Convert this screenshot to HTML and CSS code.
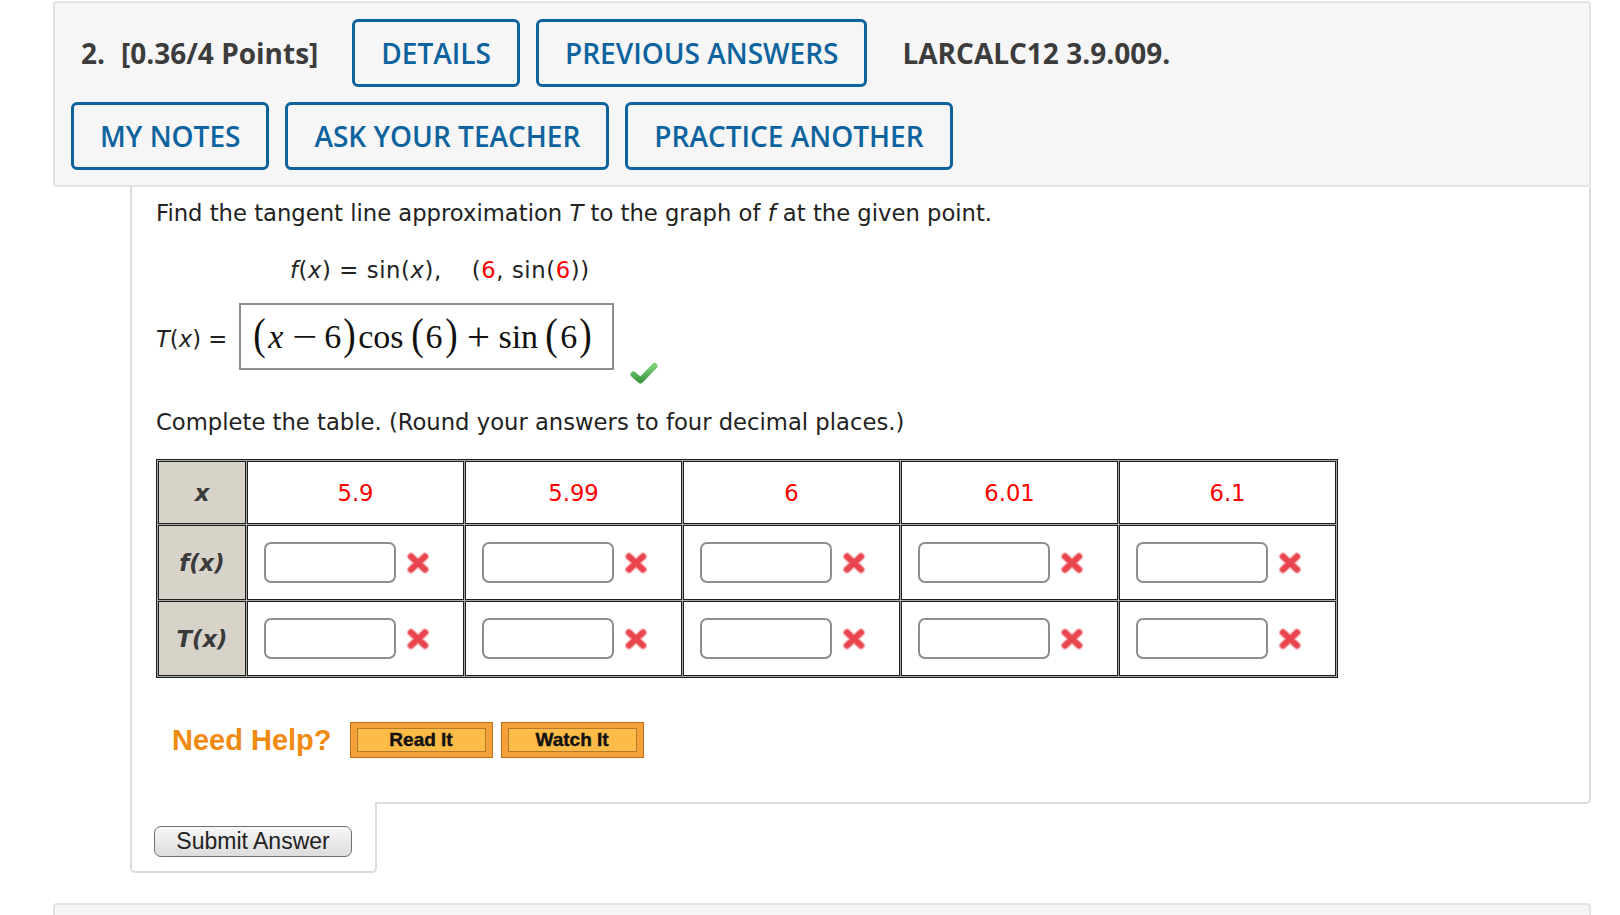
FILE: index.html
```html
<!DOCTYPE html>
<html lang="en">
<head>
<meta charset="utf-8">
<title>Question 2</title>
<link rel="stylesheet" href="styles.css">
</head>
<body>
<div class="page">
  <div class="q-header">
    <div class="hrow">
      <span class="qnum">2.</span>
      <span class="points">[0.36/4 Points]</span>
      <button class="hbtn">DETAILS</button>
      <button class="hbtn">PREVIOUS ANSWERS</button>
      <span class="qid">LARCALC12 3.9.009.</span>
    </div>
    <div class="hrow">
      <button class="hbtn">MY NOTES</button>
      <button class="hbtn">ASK YOUR TEACHER</button>
      <button class="hbtn">PRACTICE ANOTHER</button>
    </div>
  </div>

  <div class="q-body">
    <p class="prompt">Find the tangent line approximation <i>T</i> to the graph of <i>f</i> at the given point.</p>
    <p class="given"><i>f</i>(<i>x</i>) = sin(<i>x</i>),<span class="wide"></span>(<span class="red">6</span>, sin(<span class="red">6</span>))</p>
    <div class="trow">
      <span class="tlabel"><i>T</i>(<i>x</i>) =</span>
      <div class="mathbox">
        <span class="par">(</span><span class="mi">x</span><span class="mo"><span class="minus">−</span></span><span class="mn">6</span><span class="par">)</span><span class="fn">cos</span><span class="par">(</span><span class="mn">6</span><span class="par">)</span><span class="mo"><span class="plus">+</span></span><span class="fn">sin</span><span class="par">(</span><span class="mn">6</span><span class="par">)</span>
      </div>
      <svg class="check" width="28" height="22" viewBox="0 0 28 22" aria-hidden="true">
        <defs>
          <linearGradient id="gck" x1="0" y1="0" x2="0" y2="1">
            <stop offset="0" stop-color="#7ccf78"/>
            <stop offset="1" stop-color="#3d9b45"/>
          </linearGradient>
        </defs>
        <path d="M3.5 12.5 L10.5 18.5 L24.5 4" fill="none" stroke="url(#gck)" stroke-width="6" stroke-linejoin="round" stroke-linecap="round"/>
      </svg>
    </div>
    <p class="prompt complete">Complete the table. (Round your answers to four decimal places.)</p>

    <table class="grid">
      <colgroup>
        <col class="c-head">
        <col class="c-val"><col class="c-val"><col class="c-val"><col class="c-val"><col class="c-val">
      </colgroup>
      <tr class="r-x">
        <th><i>x</i></th>
        <td class="red">5.9</td>
        <td class="red">5.99</td>
        <td class="red">6</td>
        <td class="red">6.01</td>
        <td class="red">6.1</td>
      </tr>
      <tr class="r-in">
        <th><i>f</i>(<i>x</i>)</th>
        <td><div class="cell"><span class="ibox"></span><svg class="xmark" width="24" height="22" viewBox="0 0 24 22"><path d="M5 4.5 L19 17.5 M19 4.5 L5 17.5" stroke="#f7aeb2" stroke-width="8" stroke-linecap="round"/><path d="M5 4.5 L19 17.5 M19 4.5 L5 17.5" stroke="#e8454e" stroke-width="5.5" stroke-linecap="round"/></svg></div></td>
        <td><div class="cell"><span class="ibox"></span><svg class="xmark" width="24" height="22" viewBox="0 0 24 22"><path d="M5 4.5 L19 17.5 M19 4.5 L5 17.5" stroke="#f7aeb2" stroke-width="8" stroke-linecap="round"/><path d="M5 4.5 L19 17.5 M19 4.5 L5 17.5" stroke="#e8454e" stroke-width="5.5" stroke-linecap="round"/></svg></div></td>
        <td><div class="cell"><span class="ibox"></span><svg class="xmark" width="24" height="22" viewBox="0 0 24 22"><path d="M5 4.5 L19 17.5 M19 4.5 L5 17.5" stroke="#f7aeb2" stroke-width="8" stroke-linecap="round"/><path d="M5 4.5 L19 17.5 M19 4.5 L5 17.5" stroke="#e8454e" stroke-width="5.5" stroke-linecap="round"/></svg></div></td>
        <td><div class="cell"><span class="ibox"></span><svg class="xmark" width="24" height="22" viewBox="0 0 24 22"><path d="M5 4.5 L19 17.5 M19 4.5 L5 17.5" stroke="#f7aeb2" stroke-width="8" stroke-linecap="round"/><path d="M5 4.5 L19 17.5 M19 4.5 L5 17.5" stroke="#e8454e" stroke-width="5.5" stroke-linecap="round"/></svg></div></td>
        <td><div class="cell"><span class="ibox"></span><svg class="xmark" width="24" height="22" viewBox="0 0 24 22"><path d="M5 4.5 L19 17.5 M19 4.5 L5 17.5" stroke="#f7aeb2" stroke-width="8" stroke-linecap="round"/><path d="M5 4.5 L19 17.5 M19 4.5 L5 17.5" stroke="#e8454e" stroke-width="5.5" stroke-linecap="round"/></svg></div></td>
      </tr>
      <tr class="r-in">
        <th><i>T</i>(<i>x</i>)</th>
        <td><div class="cell"><span class="ibox"></span><svg class="xmark" width="24" height="22" viewBox="0 0 24 22"><path d="M5 4.5 L19 17.5 M19 4.5 L5 17.5" stroke="#f7aeb2" stroke-width="8" stroke-linecap="round"/><path d="M5 4.5 L19 17.5 M19 4.5 L5 17.5" stroke="#e8454e" stroke-width="5.5" stroke-linecap="round"/></svg></div></td>
        <td><div class="cell"><span class="ibox"></span><svg class="xmark" width="24" height="22" viewBox="0 0 24 22"><path d="M5 4.5 L19 17.5 M19 4.5 L5 17.5" stroke="#f7aeb2" stroke-width="8" stroke-linecap="round"/><path d="M5 4.5 L19 17.5 M19 4.5 L5 17.5" stroke="#e8454e" stroke-width="5.5" stroke-linecap="round"/></svg></div></td>
        <td><div class="cell"><span class="ibox"></span><svg class="xmark" width="24" height="22" viewBox="0 0 24 22"><path d="M5 4.5 L19 17.5 M19 4.5 L5 17.5" stroke="#f7aeb2" stroke-width="8" stroke-linecap="round"/><path d="M5 4.5 L19 17.5 M19 4.5 L5 17.5" stroke="#e8454e" stroke-width="5.5" stroke-linecap="round"/></svg></div></td>
        <td><div class="cell"><span class="ibox"></span><svg class="xmark" width="24" height="22" viewBox="0 0 24 22"><path d="M5 4.5 L19 17.5 M19 4.5 L5 17.5" stroke="#f7aeb2" stroke-width="8" stroke-linecap="round"/><path d="M5 4.5 L19 17.5 M19 4.5 L5 17.5" stroke="#e8454e" stroke-width="5.5" stroke-linecap="round"/></svg></div></td>
        <td><div class="cell"><span class="ibox"></span><svg class="xmark" width="24" height="22" viewBox="0 0 24 22"><path d="M5 4.5 L19 17.5 M19 4.5 L5 17.5" stroke="#f7aeb2" stroke-width="8" stroke-linecap="round"/><path d="M5 4.5 L19 17.5 M19 4.5 L5 17.5" stroke="#e8454e" stroke-width="5.5" stroke-linecap="round"/></svg></div></td>
      </tr>
    </table>

    <div class="help">
      <span class="help-label">Need Help?</span>
      <span class="hbtn2"><span class="hbtn2-in">Read It</span></span>
      <span class="hbtn2"><span class="hbtn2-in">Watch It</span></span>
    </div>
  </div>

  <div class="submit-tab">
    <button class="submit">Submit Answer</button>
  </div>

  <div class="next-q"></div>
</div>
</body>
</html>
```

FILE: styles.css
```css
html, body {
  margin: 0;
  padding: 0;
  background: #ffffff;
}

.page {
  padding: 1px 0 0 53px;
  width: 1538px;
}

/* ---------- header ---------- */
.q-header {
  background: #f6f6f6;
  border: 2px solid #e2e2e2;
  border-radius: 4px;
  padding: 16px 16px 15px 16px;
  display: flex;
  flex-direction: column;
  gap: 15px;
}

.hrow {
  display: flex;
  align-items: center;
  gap: 16px;
}

.qnum,
.points,
.qid {
  font-family: "Open Sans", sans-serif;
  font-weight: 700;
  font-size: 28px;
  color: #3c3c3c;
}

.qnum {
  margin-left: 10px;
}

.points {
  margin-right: 18px;
}

.qid {
  margin-left: 19px;
}

.hbtn {
  box-sizing: border-box;
  height: 68px;
  padding: 0 26px;
  border: 3px solid #0d639d;
  border-radius: 6px;
  background: transparent;
  color: #0d639d;
  font-family: "Open Sans", sans-serif;
  font-size: 28px;
  font-weight: 600;
  line-height: 1;
  cursor: pointer;
}

/* ---------- body ---------- */
.q-body {
  margin-left: 77px;
  border-left: 2px solid #dcdcdc;
  border-right: 2px solid #dcdcdc;
  border-bottom: 2px solid #dcdcdc;
  border-bottom-right-radius: 5px;
  padding: 12px 24px 44px 24px;
  font-family: "DejaVu Sans", Verdana, sans-serif;
  font-size: 22.7px;
  color: #222;
}

.prompt,
.given {
  margin: 0;
  line-height: 28px;
}

.given {
  margin-top: 29px;
  padding-left: 134px;
  letter-spacing: 0.6px;
}

.wide {
  display: inline-block;
  width: 30px;
}

.red {
  color: #ff0000;
}

.trow {
  display: flex;
  align-items: center;
  margin-top: 19px;
}

.tlabel {
  margin-right: 12px;
  padding-top: 4px;
}

.mathbox {
  box-sizing: border-box;
  width: 375px;
  height: 67px;
  border: 2px solid #8d8d8d;
  display: flex;
  align-items: center;
  padding-left: 10px;
  font-family: "Liberation Serif", "Times New Roman", serif;
  font-size: 34px;
  color: #111;
}

.mathbox .par {
  display: inline-block;
  width: 17px;
  text-align: center;
  font-size: 44px;
  line-height: 1;
  transform: scaleX(0.85);
  position: relative;
  top: -2px;
}

.mathbox .mi {
  font-style: italic;
  margin-right: 2px;
}

.mathbox .mo {
  display: inline-block;
  width: 0.7em;
  text-align: center;
  margin: 0 0.222em;
}

.mathbox .minus {
  display: inline-block;
  transform: scaleX(1.3);
}

.mathbox .plus {
  display: inline-block;
  transform: scale(1.2);
}

.mathbox .fn {
  margin-right: 5px;
}

.check {
  align-self: flex-end;
  margin: 0 0 -14px 16px;
}

.complete {
  margin-top: 38px;
}

/* ---------- table ---------- */
.grid {
  margin-top: 23px;
  table-layout: fixed;
  border-collapse: separate;
  border-spacing: 1px;
  border: 1px solid #1e1e1e;
  background: #a8a8a8;
  width: 1182px;
  font-size: 22px;
}

.c-head {
  width: 88px;
}

.c-val {
  width: 217px;
}

.grid th,
.grid td {
  box-sizing: border-box;
  border: 1px solid #1e1e1e;
  padding: 0;
  background: #fff;
}

.grid th {
  background: #d7d3c9;
  color: #3a3a3a;
  font-weight: 700;
  font-style: italic;
  text-align: center;
  font-size: 22.7px;
}

.r-x th,
.r-x td {
  height: 63px;
  text-align: center;
}

.r-x td {
  font-size: 22.7px;
}

.r-in th,
.r-in td {
  height: 75px;
}

.cell {
  display: flex;
  align-items: center;
  gap: 10px;
  padding-left: 16px;
}

.ibox {
  box-sizing: border-box;
  width: 132px;
  height: 41px;
  border: 2px solid #8e8e8e;
  border-radius: 7px;
  background: #fff;
}

.xmark {
  display: block;
}

/* ---------- need help ---------- */
.help {
  display: flex;
  align-items: center;
  margin-top: 44px;
  padding-left: 16px;
}

.help-label {
  font-family: "Liberation Sans", Arial, sans-serif;
  font-weight: 700;
  font-size: 29px;
  color: #f08a10;
  margin-right: 18px;
}

.hbtn2 {
  box-sizing: border-box;
  display: block;
  width: 143px;
  height: 36px;
  padding: 5px 6px;
  border: 1px solid #c2701f;
  background: #f5a13a;
  margin-right: 8px;
}

.hbtn2-in {
  box-sizing: border-box;
  display: flex;
  align-items: center;
  justify-content: center;
  height: 100%;
  border: 1px solid #b57a2c;
  background: #fdbb47;
  font-family: "Liberation Sans", Arial, sans-serif;
  font-weight: 700;
  font-size: 19px;
  color: #111;
  -webkit-text-stroke: 0.4px #111;
}

/* ---------- submit tab ---------- */
.submit-tab {
  box-sizing: border-box;
  margin: -2px 0 0 77px;
  width: 247px;
  height: 71px;
  background: #fff;
  border-left: 2px solid #dcdcdc;
  border-right: 2px solid #dcdcdc;
  border-bottom: 2px solid #dcdcdc;
  border-radius: 0 0 5px 5px;
  padding: 24px 0 0 22px;
}

.submit {
  box-sizing: border-box;
  width: 198px;
  height: 31px;
  border: 1px solid #6f6f6f;
  border-radius: 7px;
  background: linear-gradient(#f7f7f7, #dcdcdc);
  font-family: "Liberation Sans", Arial, sans-serif;
  font-size: 23px;
  color: #222;
  padding: 0;
  line-height: 1;
}

/* ---------- next question stub ---------- */
.next-q {
  margin-top: 30px;
  height: 40px;
  background: #f6f6f6;
  border: 2px solid #e2e2e2;
  border-radius: 4px;
}
```
